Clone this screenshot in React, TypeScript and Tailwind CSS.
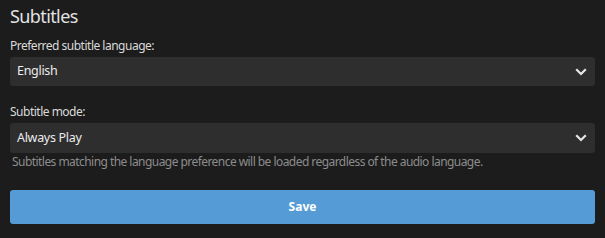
import React from 'react';

function Chevron() {
  return (
    <svg width="12" height="12" viewBox="0 0 12 12" className="text-[#e6e6e6]">
      <path d="M2 4l4 4 4-4" fill="none" stroke="currentColor" strokeWidth="2.2" strokeLinecap="square" />
    </svg>
  );
}

export default function App() {
  const font = { fontFamily: '"Noto Sans", sans-serif' };
  return (
    <div className="w-[605px] h-[238px] bg-[#1c1c1c] px-[10px] pt-[2px] text-[#e0e0e0]" style={font}>
      <h2 className="text-[18px] leading-[28px] tracking-[-0.6px] text-[#e2e2e2]">Subtitles</h2>

      {/* Preferred language */}
      <div className="mt-[7px]">
        <label className="block text-[12px] leading-[18px] tracking-[-0.5px] text-[#dadada]">Preferred subtitle language:</label>
        <div className="mt-[2px] h-[29px] rounded-[3px] bg-[#2e2e2e] flex items-center justify-between pl-[7px] pr-[8px]">
          <span className="text-[12.5px] tracking-[-0.3px] text-[#ececec]">English</span>
          <Chevron />
        </div>
      </div>

      {/* Subtitle mode */}
      <div className="mt-[17px]">
        <label className="block text-[12px] leading-[18px] tracking-[-0.5px] text-[#dadada]">Subtitle mode:</label>
        <div className="mt-[2px] h-[30px] rounded-[3px] bg-[#2e2e2e] flex items-center justify-between pl-[7px] pr-[8px]">
          <span className="text-[12.5px] tracking-[-0.3px] text-[#ececec]">Always Play</span>
          <Chevron />
        </div>
        <p className="mt-[1px] pl-[2px] text-[12px] leading-[16px] tracking-[-0.55px] text-[#8c8c8c]">
          Subtitles matching the language preference will be loaded regardless of the audio language.
        </p>
      </div>

      <button className="mt-[20px] w-full h-[34px] rounded-[3px] bg-[#559bd6] text-white text-[12px] font-bold">
        Save
      </button>
    </div>
  );
}
